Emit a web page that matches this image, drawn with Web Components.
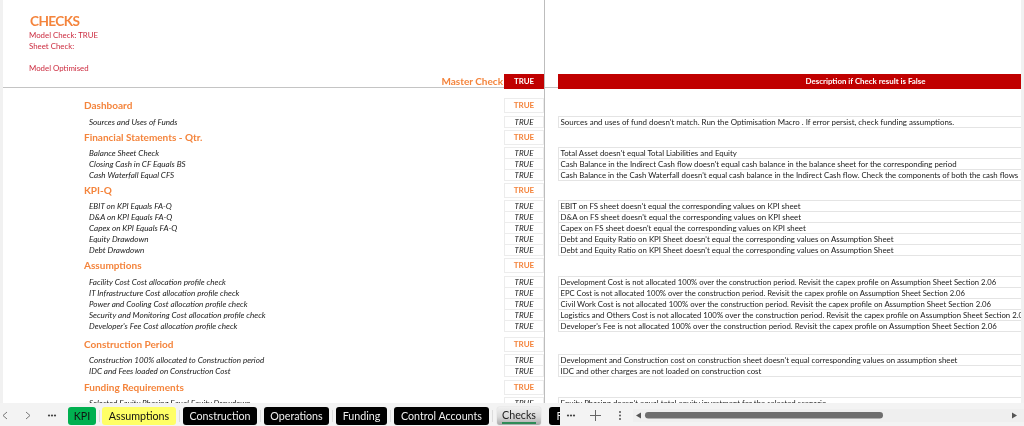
<!DOCTYPE html>
<html><head><meta charset="utf-8"><style>
html,body{margin:0;padding:0;background:#fff}
body{font-family:Lato,"Liberation Sans",sans-serif}
</style></head><body>
<x-app>
<x-sheet>
  <x-top slot="top" master="TRUE">
    <span slot="title">CHECKS</span>
    <span slot="line">Model Check: TRUE</span>
    <span slot="line">Sheet Check:</span>
    <span slot="line">&nbsp;</span>
    <span slot="line">Model Optimised</span>
  </x-top>
  <x-head label="Dashboard" style="--gap:10px"></x-head>
  <x-row label="Sources and Uses of Funds" style="--gap:2.5px;--s:7.92px">Sources and uses of fund doesn't match. Run the Optimisation Macro . If error persist, check funding assumptions.</x-row>
  <x-head label="Financial Statements - Qtr." style="--gap:3.5px"></x-head>
  <x-row label="Balance Sheet Check" style="--gap:2px">Total Asset doesn't equal Total Liabilities and Equity</x-row>
  <x-row label="Closing Cash in CF Equals BS">Cash Balance in the Indirect Cash flow doesn't equal cash balance in the balance sheet for the corresponding period</x-row>
  <x-row label="Cash Waterfall Equal CFS" style="--s:7.8px">Cash Balance in the Cash Waterfall doesn't equal cash balance in the Indirect Cash flow. Check the components of both the cash flows</x-row>
  <x-head label="KPI-Q" style="--gap:3px"></x-head>
  <x-row label="EBIT on KPI Equals FA-Q" style="--gap:2px">EBIT on FS sheet doesn't equal the corresponding values on KPI sheet</x-row>
  <x-row label="D&amp;A on KPI Equals FA-Q">D&amp;A on FS sheet doesn't equal the corresponding values on KPI sheet</x-row>
  <x-row label="Capex on KPI Equals FA-Q">Capex on FS sheet doesn't equal the corresponding values on KPI sheet</x-row>
  <x-row label="Equity Drawdown">Debt and Equity Ratio on KPI Sheet doesn't equal the corresponding values on Assumption Sheet</x-row>
  <x-row label="Debt Drawdown">Debt and Equity Ratio on KPI Sheet doesn't equal the corresponding values on Assumption Sheet</x-row>
  <x-head label="Assumptions" style="--gap:3px"></x-head>
  <x-row label="Facility Cost Cost allocation profile check" style="--gap:3px;--s:7.66px">Development Cost is not allocated 100% over the construction period. Revisit the capex profile on Assumption Sheet Section 2.06</x-row>
  <x-row label="IT Infrastructure Cost allocation profile check" style="--s:7.66px">EPC Cost is not allocated 100% over the construction period. Revisit the capex profile on Assumption Sheet Section 2.06</x-row>
  <x-row label="Power and Cooling Cost allocation profile check" style="--s:7.75px">Civil Work Cost is not allocated 100% over the construction period. Revisit the capex profile on Assumption Sheet Section 2.06</x-row>
  <x-row label="Security and Monitoring Cost allocation profile check" style="--s:7.8px">Logistics and Others Cost is not allocated 100% over the construction period. Revisit the capex profile on Assumption Sheet Section 2.06</x-row>
  <x-row label="Developer's Fee Cost allocation profile check" style="--s:7.83px">Developer's Fee is not allocated 100% over the construction period. Revisit the capex profile on Assumption Sheet Section 2.06</x-row>
  <x-head label="Construction Period" style="--gap:5.5px"></x-head>
  <x-row label="Construction 100% allocated to Construction period" style="--gap:2.5px">Development and Construction cost on construction sheet doesn't equal corresponding values on assumption sheet</x-row>
  <x-row label="IDC and Fees loaded on Construction Cost">IDC and other charges are not loaded on construction cost</x-row>
  <x-head label="Funding Requirements" style="--gap:3.5px"></x-head>
  <x-row label="Selected Equity Phasing Equal Equity Drawdown" style="--gap:2px">Equity Phasing doesn't equal total equity investment for the selected scenario</x-row>
</x-sheet>
<x-tabs>
  <x-tab style="--w:28px;--bg:#00b050;--fg:#111;margin-right:6px">KPI</x-tab>
  <x-tab style="--w:74px;--bg:#ffff66;--fg:#111;margin-right:7px">Assumptions</x-tab>
  <x-tab style="--w:74px;--bg:#000;--fg:#eee;margin-right:7px">Construction</x-tab>
  <x-tab style="--w:65px;--bg:#000;--fg:#eee;margin-right:7px">Operations</x-tab>
  <x-tab style="--w:51px;--bg:#000;--fg:#eee;margin-right:7px">Funding</x-tab>
  <x-tab style="--w:95px;--bg:#000;--fg:#eee;margin-right:8px">Control Accounts</x-tab>
  <x-tab active style="--w:44px;margin-right:8px">Checks</x-tab>
  <x-tab style="--w:40px;--bg:#000;--fg:#eee">FA-Q</x-tab>
</x-tabs>
</x-app>
<template id="t-app"><style>
:host{display:flex;flex-direction:column;width:1024px;height:426px;overflow:hidden;background:#f1f1f1;filter:blur(.3px)}
</style><slot></slot></template>
<template id="t-sheet"><style>
:host{display:block;position:relative;flex:none;height:403px;width:1018px;margin-left:3px;background:#fff;overflow:hidden}
.split{position:absolute;left:541px;top:0;bottom:0;width:1px;background:#bdbdbd}
</style><slot name="top"></slot><slot></slot><div class="split"></div></template>
<template id="t-top"><style>
:host{display:flex;flex-direction:column;height:88px;box-sizing:border-box;border-bottom:1px solid #c4c4c4;position:relative}
.title{margin:12px 0 0 27px;height:18px;font:bold 13.6px/18px Lato,sans-serif;letter-spacing:-.6px;color:#f4843c}
.lines{margin:0 0 0 26px;color:#cc2b3f;font-size:7.85px;line-height:10.9px;display:flex;flex-direction:column}
::slotted([slot=line]){display:block;height:10.9px}
.master{margin-top:auto;display:grid;grid-template-columns:501px 40px 14px 463px;height:14px;align-items:stretch;white-space:nowrap}
.m{font:bold 10px/15px Lato,sans-serif;color:#f4843c;text-align:right;padding-right:1px}
.t,.d{background:#c00000;color:#fff;font:bold 7.9px/14px Lato,sans-serif;text-align:center}
.d{grid-column:4;padding-left:152px}
</style><div class="title"><slot name="title"></slot></div><div class="lines"><slot name="line"></slot></div>
<div class="master"><div class="m">Master Check</div><div class="t"></div><div></div><div class="d">Description if Check result is False</div></div></template>
<template id="t-head"><style>
:host{display:grid;grid-template-columns:81px 420px 40px;height:15px;margin-top:var(--gap,0);align-items:stretch}
.l{grid-column:2;font:bold 10px/15px Lato,sans-serif;color:#f4843c}
.t{box-sizing:border-box;border:1px solid #ececec;font:bold 8px/13px Lato,sans-serif;color:#f4843c;text-align:center}
</style><div class="l"></div><div class="t">TRUE</div></template>
<template id="t-row"><style>
:host{display:grid;grid-template-columns:86px 415px 40px 14px 463px;height:11px;margin-top:var(--gap,0);align-items:stretch;white-space:nowrap;color:#1a1a1a}
.l{grid-column:2;font:italic 8.1px/12px Lato,sans-serif}
.t{box-sizing:border-box;border:1px solid #ececec;font:italic 8.1px/10px Lato,sans-serif;text-align:center}
.d{grid-column:4 / 6;margin-left:14px;box-sizing:border-box;border:1px solid #e4e4e4;border-right:0;font:var(--s,7.85px)/10px Lato,sans-serif;padding-left:1.5px;overflow:hidden}
</style><div class="l"></div><div class="t">TRUE</div><div class="d"><slot></slot></div></template>
<template id="t-tabs"><style>
:host{display:block;position:relative;flex:none;height:23px;background:#f3f3f3;overflow:hidden}
.nav{position:absolute;left:0;top:0;height:23px;width:68px}
.tabs{display:flex;align-items:flex-start;padding:4px 0 0 68px;width:500px}
.right{position:absolute;left:560px;right:0;top:0;height:23px;background:#f3f3f3}
.right svg{position:absolute;left:0;top:0}
</style>
<div class="tabs"><slot></slot></div>
<svg class="nav" width="68" height="23"><path d="M7 9L3 12.500L7 16" fill="none" stroke="#777" stroke-width="1"/><path d="M26 9L30 12.500L26 16" fill="none" stroke="#777" stroke-width="1"/><g fill="#444"><circle cx="49" cy="12.500" r="1.100"/><circle cx="52" cy="12.500" r="1.100"/><circle cx="55" cy="12.500" r="1.100"/></g></svg>
<div class="right"><svg width="464" height="23"><rect x="73" y="6" width="391" height="13" fill="#efefef"/><g fill="#444"><circle cx="8" cy="12.500" r="1.100"/><circle cx="11" cy="12.500" r="1.100"/><circle cx="14" cy="12.500" r="1.100"/></g><path d="M35.500 7V18M30 12.500H41" stroke="#666" fill="none"/><g fill="#555"><circle cx="60" cy="9" r="1"/><circle cx="60" cy="12.500" r="1"/><circle cx="60" cy="16" r="1"/></g><path d="M81 9.500L76 12.500L81 15.500Z" fill="#555"/><rect x="85" y="9" width="238" height="6.500" rx="3.200" fill="#6e6e6e"/><path d="M452 9.500L457 12.500L452 15.500Z" fill="#555"/></svg></div></template>
<template id="t-tab"><style>
:host{display:flex;position:relative;box-sizing:border-box;flex:none;width:var(--w);height:18px;border-radius:3px;background:var(--bg);color:var(--fg);font:10.7px/18px Lato,sans-serif;justify-content:center;white-space:nowrap}
:host::after{content:"";position:absolute;right:-4px;top:3px;height:12px;width:1px;background:#dcdcdc}
:host([active]){background:linear-gradient(#f0f0f0,#d8d8d8 55%,#a8a8a8);color:#222;line-height:15px;box-shadow:0 0 1px #aaa}
:host([active])::after{right:auto;left:5px;top:15px;height:1.5px;width:34px;background:#2e8b57}
</style><slot></slot></template>
<script>
function tpl(id){return document.getElementById(id).content.cloneNode(true)}
class Base extends HTMLElement{constructor(id){super();this.attachShadow({mode:'open'}).appendChild(tpl(id))}}
customElements.define('x-app',class extends Base{constructor(){super('t-app')}});
customElements.define('x-sheet',class extends Base{constructor(){super('t-sheet')}});
customElements.define('x-top',class extends Base{constructor(){super('t-top')}
 connectedCallback(){this.shadowRoot.querySelector('.t').textContent=this.getAttribute('master')}});
customElements.define('x-head',class extends Base{constructor(){super('t-head')}
 connectedCallback(){this.shadowRoot.querySelector('.l').textContent=this.getAttribute('label')}});
customElements.define('x-row',class extends Base{constructor(){super('t-row')}
 connectedCallback(){this.shadowRoot.querySelector('.l').textContent=this.getAttribute('label')}});
customElements.define('x-tabs',class extends Base{constructor(){super('t-tabs')}});
customElements.define('x-tab',class extends Base{constructor(){super('t-tab')}});
</script>
</body></html>
